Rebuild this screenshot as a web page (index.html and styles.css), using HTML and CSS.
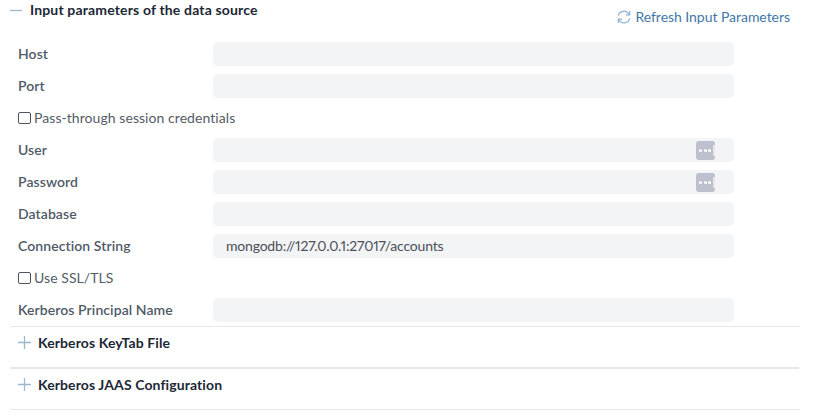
FILE: index.html
```html
<!DOCTYPE html>
<html lang="en">
<head>
<meta charset="utf-8">
<title>Input parameters</title>
<link rel="stylesheet" href="styles.css">
</head>
<body>
<div class="panel">
  <section class="section-open">
    <header class="head">
      <div class="head-title">
        <svg class="tog" width="12" height="13" viewBox="0 0 12 13"><path d="M0 6.5h12" /></svg>
        <h2>Input parameters of the data source</h2>
      </div>
      <a class="refresh">
        <svg width="14" height="14" viewBox="0 0 14 14" fill="none"><path d="M1.2 5.6A5.9 5.9 0 0 1 11.4 3.2L12.6 4.6M12.7 1V4.8H8.9M12.8 8.4A5.9 5.9 0 0 1 2.6 10.8L1.4 9.4M1.3 13V9.2H5.1"/></svg>
        <span>Refresh Input Parameters</span>
      </a>
    </header>
    <div class="rows">
      <div class="row"><label>Host</label><div class="field"></div></div>
      <div class="row"><label>Port</label><div class="field"></div></div>
      <div class="row"><span class="check"></span><span class="check-label">Pass-through session credentials</span></div>
      <div class="row"><label>User</label><div class="field"><span class="dots"><i></i><i></i><i></i><b></b></span></div></div>
      <div class="row"><label>Password</label><div class="field"><span class="dots"><i></i><i></i><i></i><b></b></span></div></div>
      <div class="row"><label>Database</label><div class="field"></div></div>
      <div class="row"><label>Connection String</label><div class="field">mongodb://127.0.0.1:27017/accounts</div></div>
      <div class="row"><span class="check"></span><span class="check-label">Use SSL/TLS</span></div>
      <div class="row"><label>Kerberos Principal Name</label><div class="field"></div></div>
    </div>
  </section>
  <section class="fold">
    <svg class="tog" width="13" height="13" viewBox="0 0 13 13"><path d="M0 6.5h13M6.5 0v13" /></svg>
    <h2>Kerberos KeyTab File</h2>
  </section>
  <section class="fold fold-last">
    <svg class="tog" width="13" height="13" viewBox="0 0 13 13"><path d="M0 6.5h13M6.5 0v13" /></svg>
    <h2>Kerberos JAAS Configuration</h2>
  </section>
</div>
</body>
</html>
```
FILE: styles.css
```css
* { box-sizing: border-box; }
html, body { margin: 0; padding: 0; background: #fff; overflow: hidden; }
body { width: 820px; height: 420px; font-family: Lato, "Open Sans", sans-serif; font-size: 14px; line-height: 20px; color: #4d5662; font-variant-numeric: proportional-nums; }
.panel { margin: 0 21px 0 10px; }
h2 { margin: 0; font-size: 14px; font-weight: 700; line-height: 20px; color: #1c2836; letter-spacing: 0.16px; }
.tog { flex: none; }
.tog path { stroke: #9db8cb; stroke-width: 1.3; fill: none; }
.head { display: flex; justify-content: space-between; height: 42px; }
.head-title { display: flex; align-items: center; gap: 8px; height: 20px; }
.refresh { display: flex; align-items: center; gap: 4px; height: 34px; padding-right: 9px; color: #3f77a8; letter-spacing: -0.04px; }
.refresh svg { stroke: #8db4d3; stroke-width: 1.2; }
.rows { display: flex; flex-direction: column; gap: 8px; padding-left: 8px; padding-bottom: 4px; }
.row { display: flex; align-items: center; height: 24px; }
.row label { width: 195px; font-weight: 600; color: #505a67; letter-spacing: 0.08px; }
.field { display: flex; align-items: center; width: 521px; height: 24px; border-radius: 5px; background: #f3f4f6; padding-left: 13px; color: #4a4f57; letter-spacing: -0.2px; position: relative; }
.dots { position: absolute; right: 19px; top: 3px; width: 19px; height: 19px; border-radius: 3px; background: #bcc1cd; display: flex; align-items: center; gap: 1.5px; padding-left: 3px; }
.dots i { width: 3px; height: 3px; background: #fff; border-radius: 50%; }
.dots b { width: 2px; height: 11px; background: #e3e5ea; }
.check { width: 12.5px; height: 12.5px; border: 1.5px solid #4d5662; border-radius: 2px; margin-right: 3.5px; }
.check-label { color: #545c67; letter-spacing: 0.06px; }
.fold { display: flex; align-items: flex-start; gap: 7px; height: 41px; padding: 6px 0 0 8px; border-top: 1px solid #e8e8e8; }
.fold h2 { letter-spacing: 0.1px; }
.fold .tog { margin-top: 3px; }
.fold-last { border-top-width: 2px; height: 43px; border-bottom: 1px solid #e8e8e8; }
```
